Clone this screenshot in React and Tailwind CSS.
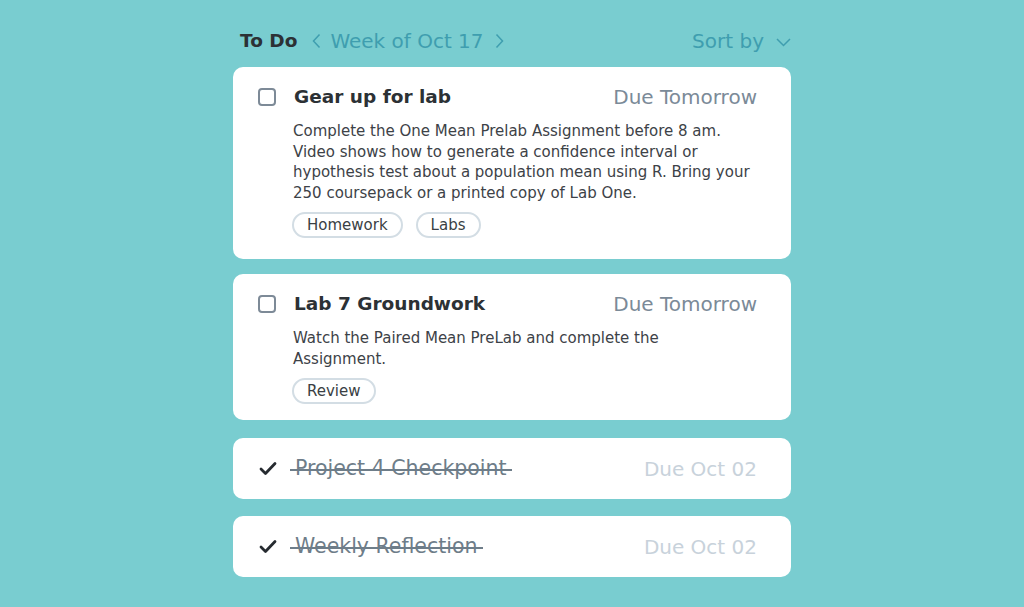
import React from 'react';

const font = { fontFamily: '"DejaVu Sans", Verdana, sans-serif' };

const Checkbox = () => (
    <span className="w-[18px] h-[18px] rounded-[4px] border-2 border-[#7d8a97] shrink-0"></span>
);

const Check = () => (
    <svg width="18" height="15" viewBox="0 0 18 15" className="shrink-0">
        <path d="M2 8 L6.5 12.5 L16 2.5" fill="none" stroke="#262b30" strokeWidth="2.8" strokeLinecap="round" strokeLinejoin="round" />
    </svg>
);

const Tag = ({ children }) => (
    <span className="h-[26px] px-[13px] flex items-center rounded-full border-2 border-[#d3dde4] text-[15px] text-[#3a3f44]">
        {children}
    </span>
);

const OpenTask = ({ title, due, desc, tags, className }) => (
    <div className={`bg-white rounded-[10px] pl-[25px] pr-[34px] pt-4 ${className}`}>
        <div className="flex items-center h-[28px]">
            <Checkbox />
            <span className="ml-[18px] text-[18.5px] font-bold text-[#2c3135]">{title}</span>
            <span className="ml-auto text-[20px] text-[#7b8a98]">{due}</span>
        </div>
        <p className="mt-[10px] ml-[35px] pr-[5px] text-[15px] leading-[20.5px] text-[#3d4247]">{desc}</p>
        <div className="mt-[9px] ml-[34px] flex gap-[13px]">
            {tags.map((t) => (
                <Tag key={t}>{t}</Tag>
            ))}
        </div>
    </div>
);

const DoneTask = ({ title, due, className }) => (
    <div className={`bg-white rounded-[10px] h-[61px] pl-[26px] pr-[34px] flex items-center ${className}`}>
        <Check />
        <span className="relative ml-[18px] text-[20.5px] text-[#6e7d89]">
            {title}
            <span className="absolute left-[-5px] right-[-5px] top-[51%] h-[2px] bg-[#6e7d89]"></span>
        </span>
        <span className="ml-auto text-[20px] text-[#c8d2db]">{due}</span>
    </div>
);

export default function App() {
    return (
        <div className="min-h-[607px] bg-[#79cdd0] flex justify-center" style={font}>
            <div className="w-[558px] pt-[27px]">
                {/* Header */}
                <div className="flex items-center h-[28px] pl-[7px]">
                    <span className="text-[18.5px] font-bold text-[#2c3135]">To Do</span>
                    <span className="ml-[15px] flex items-center text-[20px] text-[#3f9eaf]">
                        <svg width="9" height="16" viewBox="0 0 9 16"><path d="M7.5 1.5 L1.5 8 L7.5 14.5" fill="none" stroke="#3f9eaf" strokeWidth="1.5" /></svg>
                        <span className="ml-[9px] mr-[11px]">Week of Oct 17</span>
                        <svg width="9" height="16" viewBox="0 0 9 16"><path d="M1.5 1.5 L7.5 8 L1.5 14.5" fill="none" stroke="#3f9eaf" strokeWidth="1.5" /></svg>
                    </span>
                    <span className="ml-auto flex items-center text-[20px] text-[#3f9eaf]">
                        Sort by
                        <svg width="15" height="9" viewBox="0 0 15 9" className="ml-[12px] mt-[2px]"><path d="M1 1 L7.5 7.5 L14 1" fill="none" stroke="#3f9eaf" strokeWidth="1.5" /></svg>
                    </span>
                </div>

                <div className="mt-[12px] flex flex-col">
                    <OpenTask
                        title="Gear up for lab"
                        due="Due Tomorrow"
                        desc="Complete the One Mean Prelab Assignment before 8 am. Video shows how to generate a confidence interval or hypothesis test about a population mean using R. Bring your 250 coursepack or a printed copy of Lab One."
                        tags={['Homework', 'Labs']}
                        className="pb-[21px]"
                    />
                    <OpenTask
                        title="Lab 7 Groundwork"
                        due="Due Tomorrow"
                        desc="Watch the Paired Mean PreLab and complete the Assignment."
                        tags={['Review']}
                        className="mt-[15px] pb-[16px]"
                    />
                    <DoneTask title="Project 4 Checkpoint" due="Due Oct 02" className="mt-[18px]" />
                    <DoneTask title="Weekly Reflection" due="Due Oct 02" className="mt-[17px]" />
                </div>
            </div>
        </div>
    );
}
